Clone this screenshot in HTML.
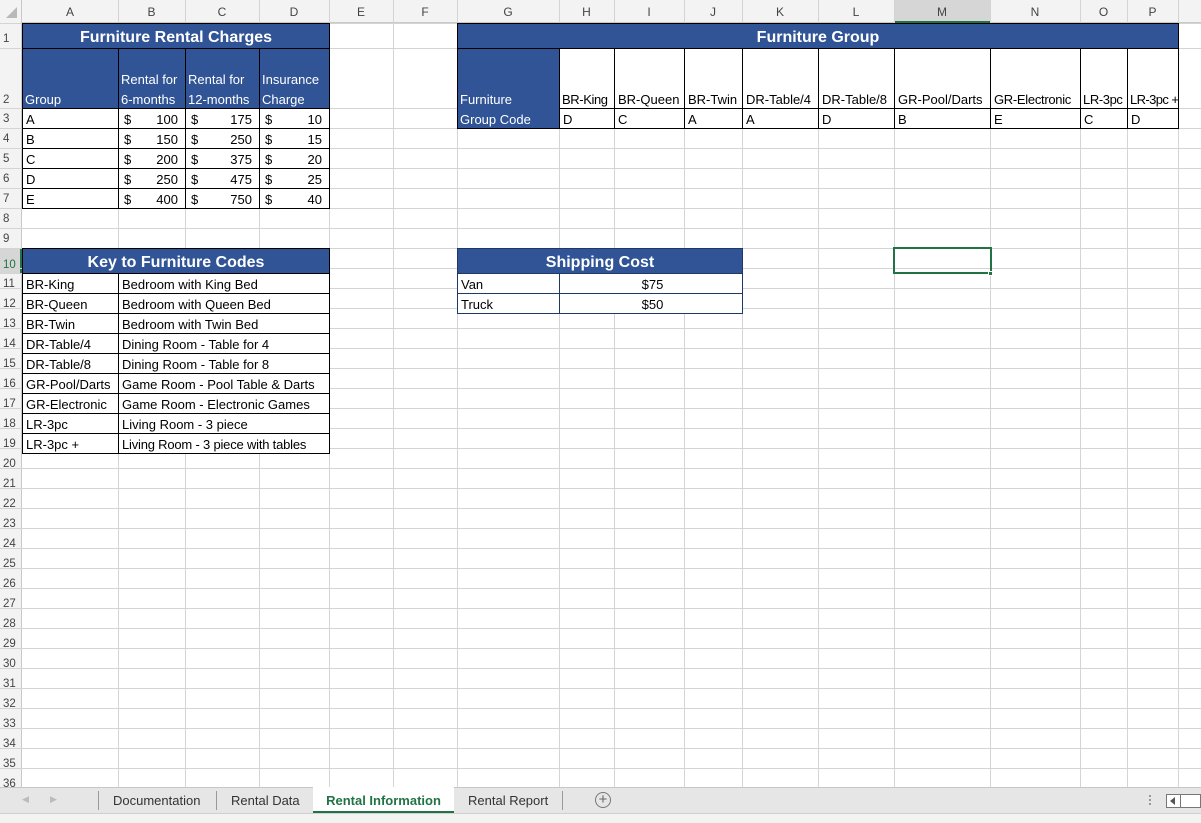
<!DOCTYPE html>
<html><head><meta charset="utf-8"><style>
*{margin:0;padding:0;box-sizing:border-box}
body{width:1201px;height:823px;position:relative;overflow:hidden;background:#fff;font-family:"Liberation Sans",Arial,sans-serif;font-size:13px;color:#000}
.a{position:absolute}
.vl{position:absolute;top:0;width:1px;height:787px;background:#d4d4d4}
.hl{position:absolute;left:0;width:1201px;height:1px;background:#d4d4d4}
.ch{position:absolute;top:0;height:23px;line-height:24px;text-align:center;color:#444;font-size:12px}
.rh{position:absolute;left:0;width:22px;height:20px;line-height:22px;color:#444;font-size:11.5px;padding-left:3px}
.blue{position:absolute;background:#305496;color:#fff}
.t{position:absolute;font-weight:bold;font-size:16px;text-align:center;color:#fff}
.c{position:absolute;height:20px;line-height:21px;padding-left:3px;white-space:nowrap;border:1px solid #000;background:#fff;overflow:hidden}
.w{position:absolute;color:#fff;white-space:nowrap;line-height:20px;padding-left:3px}
.dl{position:absolute;left:5px}
.num{position:absolute;right:7px}
</style></head><body>
<div class="a" style="left:0;top:0;width:1201px;height:23px;background:#f3f3f3;border-bottom:1px solid #c8c8c8"></div>
<div class="a" style="left:0;top:0;width:22px;height:787px;background:#f3f3f3;border-right:1px solid #c8c8c8"></div>
<div class="a" style="left:894px;top:0;width:96px;height:23px;background:#d6d6d6;border-bottom:2px solid #217346"></div>
<div class="a" style="left:0;top:248px;width:22px;height:25px;background:#d6d6d6;border-right:2px solid #217346"></div>
<svg class="a" style="left:4px;top:5px" width="14" height="14"><path d="M13 2 L13 13 L2 13 Z" fill="#b8b8b8"/></svg>
<div class="vl" style="left:118px"></div><div class="vl" style="left:185px"></div><div class="vl" style="left:259px"></div><div class="vl" style="left:329px"></div><div class="vl" style="left:393px"></div><div class="vl" style="left:457px"></div><div class="vl" style="left:559px"></div><div class="vl" style="left:614px"></div><div class="vl" style="left:684px"></div><div class="vl" style="left:742px"></div><div class="vl" style="left:818px"></div><div class="vl" style="left:894px"></div><div class="vl" style="left:990px"></div><div class="vl" style="left:1080px"></div><div class="vl" style="left:1127px"></div><div class="vl" style="left:1178px"></div>
<div class="hl" style="top:48px"></div>
<div class="hl" style="top:108px"></div>
<div class="a" style="left:0;top:109px;width:1201px;height:680px;background:repeating-linear-gradient(to bottom,transparent 0,transparent 19px,#d4d4d4 19px,#d4d4d4 20px)"></div>
<div class="hl" style="top:23px"></div>
<div class="ch" style="left:22px;width:96px">A</div><div class="ch" style="left:118px;width:67px">B</div><div class="ch" style="left:185px;width:74px">C</div><div class="ch" style="left:259px;width:70px">D</div><div class="ch" style="left:329px;width:64px">E</div><div class="ch" style="left:393px;width:64px">F</div><div class="ch" style="left:457px;width:102px">G</div><div class="ch" style="left:559px;width:55px">H</div><div class="ch" style="left:614px;width:70px">I</div><div class="ch" style="left:684px;width:58px">J</div><div class="ch" style="left:742px;width:76px">K</div><div class="ch" style="left:818px;width:76px">L</div><div class="ch" style="left:894px;width:96px">M</div><div class="ch" style="left:990px;width:90px">N</div><div class="ch" style="left:1080px;width:47px">O</div><div class="ch" style="left:1127px;width:51px">P</div>
<div class="rh" style="top:28px">1</div><div class="rh" style="top:89px">2</div>
<div class="rh" style="top:108px">3</div><div class="rh" style="top:128px">4</div><div class="rh" style="top:148px">5</div><div class="rh" style="top:168px">6</div><div class="rh" style="top:188px">7</div><div class="rh" style="top:208px">8</div><div class="rh" style="top:228px">9</div><div class="rh" style="top:254px;color:#217346">10</div>
<div class="rh" style="top:273px">11</div><div class="rh" style="top:293px">12</div><div class="rh" style="top:313px">13</div><div class="rh" style="top:333px">14</div><div class="rh" style="top:353px">15</div><div class="rh" style="top:373px">16</div><div class="rh" style="top:393px">17</div><div class="rh" style="top:413px">18</div><div class="rh" style="top:433px">19</div><div class="rh" style="top:453px">20</div><div class="rh" style="top:473px">21</div><div class="rh" style="top:493px">22</div><div class="rh" style="top:513px">23</div><div class="rh" style="top:533px">24</div><div class="rh" style="top:553px">25</div><div class="rh" style="top:573px">26</div><div class="rh" style="top:593px">27</div><div class="rh" style="top:613px">28</div><div class="rh" style="top:633px">29</div><div class="rh" style="top:653px">30</div><div class="rh" style="top:673px">31</div><div class="rh" style="top:693px">32</div><div class="rh" style="top:713px">33</div><div class="rh" style="top:733px">34</div><div class="rh" style="top:753px">35</div><div class="rh" style="top:773px;height:14px;overflow:hidden">36</div>
<div class="a" style="left:0;top:248px;width:22px;height:1px;background:#d4d4d4"></div><div class="a" style="left:0;top:273px;width:22px;height:1px;background:#d4d4d4"></div>

<div class="blue" style="left:22px;top:23px;width:308px;height:86px;border:1px solid #000"></div>
<div class="t" style="left:22px;top:29px;width:308px">Furniture Rental Charges</div>
<div class="a" style="left:118px;top:48px;width:1px;height:60px;background:#000"></div>
<div class="a" style="left:185px;top:48px;width:1px;height:60px;background:#000"></div>
<div class="a" style="left:259px;top:48px;width:1px;height:60px;background:#000"></div>
<div class="a" style="left:22px;top:48px;width:308px;height:1px;background:#000"></div>
<div class="w" style="left:22px;top:90px">Group</div>
<div class="w" style="left:118px;top:70px">Rental for<br>6-months</div>
<div class="w" style="left:185px;top:70px">Rental for<br>12-months</div>
<div class="w" style="left:259px;top:70px">Insurance<br>Charge</div>
<div class="c" style="left:22px;top:108px;width:97px;height:21px">A</div><div class="c" style="left:118px;top:108px;width:68px;height:21px"><span class="dl">$</span><span class="num">100</span></div><div class="c" style="left:185px;top:108px;width:75px;height:21px"><span class="dl">$</span><span class="num">175</span></div><div class="c" style="left:259px;top:108px;width:71px;height:21px"><span class="dl">$</span><span class="num">10</span></div>
<div class="c" style="left:22px;top:128px;width:97px;height:21px">B</div><div class="c" style="left:118px;top:128px;width:68px;height:21px"><span class="dl">$</span><span class="num">150</span></div><div class="c" style="left:185px;top:128px;width:75px;height:21px"><span class="dl">$</span><span class="num">250</span></div><div class="c" style="left:259px;top:128px;width:71px;height:21px"><span class="dl">$</span><span class="num">15</span></div>
<div class="c" style="left:22px;top:148px;width:97px;height:21px">C</div><div class="c" style="left:118px;top:148px;width:68px;height:21px"><span class="dl">$</span><span class="num">200</span></div><div class="c" style="left:185px;top:148px;width:75px;height:21px"><span class="dl">$</span><span class="num">375</span></div><div class="c" style="left:259px;top:148px;width:71px;height:21px"><span class="dl">$</span><span class="num">20</span></div>
<div class="c" style="left:22px;top:168px;width:97px;height:21px">D</div><div class="c" style="left:118px;top:168px;width:68px;height:21px"><span class="dl">$</span><span class="num">250</span></div><div class="c" style="left:185px;top:168px;width:75px;height:21px"><span class="dl">$</span><span class="num">475</span></div><div class="c" style="left:259px;top:168px;width:71px;height:21px"><span class="dl">$</span><span class="num">25</span></div>
<div class="c" style="left:22px;top:188px;width:97px;height:21px">E</div><div class="c" style="left:118px;top:188px;width:68px;height:21px"><span class="dl">$</span><span class="num">400</span></div><div class="c" style="left:185px;top:188px;width:75px;height:21px"><span class="dl">$</span><span class="num">750</span></div><div class="c" style="left:259px;top:188px;width:71px;height:21px"><span class="dl">$</span><span class="num">40</span></div>

<div class="blue" style="left:457px;top:23px;width:722px;height:26px;border:1px solid #000"></div>
<div class="t" style="left:457px;top:29px;width:722px">Furniture Group</div>
<div class="blue" style="left:457px;top:48px;width:103px;height:81px;border:1px solid #000"></div>
<div class="w" style="left:457px;top:90px">Furniture</div>
<div class="w" style="left:457px;top:110px">Group Code</div>
<div class="c" style="left:559px;top:48px;width:56px;height:61px;line-height:19px;padding-top:41px;padding-left:2px;letter-spacing:-0.4px">BR-King</div>
<div class="c" style="left:614px;top:48px;width:71px;height:61px;line-height:19px;padding-top:41px">BR-Queen</div>
<div class="c" style="left:684px;top:48px;width:59px;height:61px;line-height:19px;padding-top:41px">BR-Twin</div>
<div class="c" style="left:742px;top:48px;width:77px;height:61px;line-height:19px;padding-top:41px">DR-Table/4</div>
<div class="c" style="left:818px;top:48px;width:77px;height:61px;line-height:19px;padding-top:41px">DR-Table/8</div>
<div class="c" style="left:894px;top:48px;width:97px;height:61px;line-height:19px;padding-top:41px">GR-Pool/Darts</div>
<div class="c" style="left:990px;top:48px;width:91px;height:61px;line-height:19px;padding-top:41px;letter-spacing:-0.3px">GR-Electronic</div>
<div class="c" style="left:1080px;top:48px;width:48px;height:61px;line-height:19px;padding-top:41px;padding-left:2px;letter-spacing:-0.4px">LR-3pc</div>
<div class="c" style="left:1127px;top:48px;width:52px;height:61px;line-height:19px;padding-top:41px;padding-left:2px;letter-spacing:-0.6px">LR-3pc +</div>
<div class="c" style="left:559px;top:108px;width:56px;height:21px">D</div>
<div class="c" style="left:614px;top:108px;width:71px;height:21px">C</div>
<div class="c" style="left:684px;top:108px;width:59px;height:21px">A</div>
<div class="c" style="left:742px;top:108px;width:77px;height:21px">A</div>
<div class="c" style="left:818px;top:108px;width:77px;height:21px">D</div>
<div class="c" style="left:894px;top:108px;width:97px;height:21px">B</div>
<div class="c" style="left:990px;top:108px;width:91px;height:21px">E</div>
<div class="c" style="left:1080px;top:108px;width:48px;height:21px">C</div>
<div class="c" style="left:1127px;top:108px;width:52px;height:21px">D</div>

<div class="blue" style="left:22px;top:248px;width:308px;height:26px;border:1px solid #000"></div>
<div class="t" style="left:22px;top:254px;width:308px">Key to Furniture Codes</div>
<div class="c" style="left:22px;top:273px;width:97px;height:21px">BR-King</div><div class="c" style="left:118px;top:273px;width:212px;height:21px">Bedroom with King Bed</div>
<div class="c" style="left:22px;top:293px;width:97px;height:21px">BR-Queen</div><div class="c" style="left:118px;top:293px;width:212px;height:21px">Bedroom with Queen Bed</div>
<div class="c" style="left:22px;top:313px;width:97px;height:21px">BR-Twin</div><div class="c" style="left:118px;top:313px;width:212px;height:21px">Bedroom with Twin Bed</div>
<div class="c" style="left:22px;top:333px;width:97px;height:21px">DR-Table/4</div><div class="c" style="left:118px;top:333px;width:212px;height:21px">Dining Room - Table for 4</div>
<div class="c" style="left:22px;top:353px;width:97px;height:21px">DR-Table/8</div><div class="c" style="left:118px;top:353px;width:212px;height:21px">Dining Room - Table for 8</div>
<div class="c" style="left:22px;top:373px;width:97px;height:21px">GR-Pool/Darts</div><div class="c" style="left:118px;top:373px;width:212px;height:21px">Game Room - Pool Table &amp; Darts</div>
<div class="c" style="left:22px;top:393px;width:97px;height:21px">GR-Electronic</div><div class="c" style="left:118px;top:393px;width:212px;height:21px">Game Room - Electronic Games</div>
<div class="c" style="left:22px;top:413px;width:97px;height:21px">LR-3pc</div><div class="c" style="left:118px;top:413px;width:212px;height:21px">Living Room - 3 piece</div>
<div class="c" style="left:22px;top:433px;width:97px;height:21px">LR-3pc +</div><div class="c" style="left:118px;top:433px;width:212px;height:21px;letter-spacing:-0.2px">Living Room - 3 piece with tables</div>

<div class="blue" style="left:457px;top:248px;width:286px;height:26px;border:1px solid #1f3864"></div>
<div class="t" style="left:457px;top:254px;width:286px">Shipping Cost</div>
<div class="c" style="left:457px;top:273px;width:103px;height:21px;border-color:#1f3864">Van</div><div class="c" style="left:559px;top:273px;width:184px;height:21px;text-align:center;border-color:#1f3864">$75</div>
<div class="c" style="left:457px;top:293px;width:103px;height:21px;border-color:#1f3864">Truck</div><div class="c" style="left:559px;top:293px;width:184px;height:21px;text-align:center;border-color:#1f3864">$50</div>

<div class="a" style="left:893px;top:247px;width:99px;height:27px;border:2px solid #217346"></div>
<div class="a" style="left:988px;top:271px;width:5px;height:5px;background:#217346;border:1px solid #fff"></div>

<div class="a" style="left:0;top:787px;width:1201px;height:26px;background:#e6e6e6;border-top:1px solid #c6c6c6"></div>
<div class="a" style="left:22px;top:794px;color:#bbb;font-size:9px">◀</div><div class="a" style="left:50px;top:794px;color:#bbb;font-size:9px">▶</div>
<div class="a" style="left:98px;top:791px;width:1px;height:19px;background:#999"></div>
<div class="a" style="left:113px;top:793px;color:#333">Documentation</div>
<div class="a" style="left:216px;top:791px;width:1px;height:19px;background:#999"></div>
<div class="a" style="left:231px;top:793px;color:#333">Rental Data</div>
<div class="a" style="left:313px;top:787px;width:141px;height:26px;background:#fff;border-bottom:2px solid #217346"></div>
<div class="a" style="left:313px;top:793px;width:141px;text-align:center;color:#217346;font-weight:bold">Rental Information</div>
<div class="a" style="left:468px;top:793px;color:#333">Rental Report</div>
<div class="a" style="left:562px;top:791px;width:1px;height:19px;background:#999"></div>
<div class="a" style="left:595px;top:792px;width:16px;height:16px;border:1px solid #777;border-radius:50%;text-align:center;line-height:13px;color:#666;font-size:15px">+</div>
<div class="a" style="left:1149px;top:795px;width:2px;height:2px;background:#999;box-shadow:0 4px #999,0 8px #999"></div>
<div class="a" style="left:1166px;top:794px;width:35px;height:14px;border:1px solid #777;background:#fff"></div>
<div class="a" style="left:1180px;top:794px;width:1px;height:14px;background:#777"></div>
<div class="a" style="left:1170px;top:797px;width:0;height:0;border-top:4px solid transparent;border-bottom:4px solid transparent;border-right:5px solid #555"></div>
<div class="a" style="left:0;top:813px;width:1201px;height:10px;background:#f3f3f3;border-top:1px solid #d0d0d0"></div>
</body></html>
